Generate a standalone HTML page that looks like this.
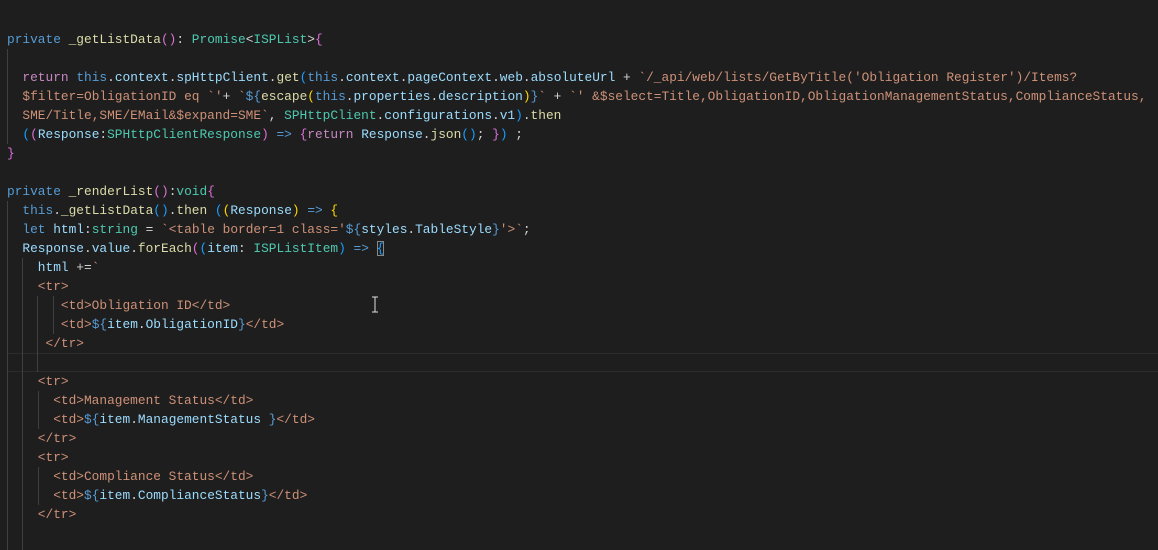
<!DOCTYPE html>
<html><head><meta charset="utf-8"><style>
html,body{margin:0;padding:0;background:#1e1e1e;width:1158px;height:550px;overflow:hidden}
.l{position:absolute;left:7px;height:19px;line-height:19px;font-family:"Liberation Mono",monospace;font-size:12.83px;white-space:pre;color:#d4d4d4}
.k{color:#569cd6}.r{color:#c586c0}.f{color:#dcdcaa}.t{color:#4ec9b0}.s{color:#ce9178}.v{color:#9cdcfe}
.p1{color:#da70d6}.p2{color:#ffd700}.p3{color:#179fff}
.g{position:absolute;width:1px;background:#404040}
</style></head><body>
<div style="position:absolute;left:7px;top:353px;width:1151px;height:17px;border-top:1px solid #2c2c2c;border-bottom:1px solid #2c2c2c"></div>
<div class="g" style="left:7px;top:49px;height:95px"></div>
<div class="g" style="left:7px;top:201px;height:349px"></div>
<div class="g" style="left:22px;top:258px;height:292px"></div>
<div class="g" style="left:37px;top:296px;height:76px"></div>
<div class="g" style="left:53px;top:296px;height:38px"></div>
<div class="g" style="left:38px;top:391px;height:38px"></div>
<div class="g" style="left:38px;top:467px;height:38px"></div>

<div class="l" style="top:30px"><span class="k">private</span> <span class="f">_getListData</span><span class="p1">()</span>: <span class="t">Promise</span>&lt;<span class="t">ISPList</span>&gt;<span class="p1">{</span></div>
<div class="l" style="top:68px">  <span class="r">return</span> <span class="k">this</span>.<span class="v">context</span>.<span class="v">spHttpClient</span>.<span class="f">get</span><span class="p3">(</span><span class="k">this</span>.<span class="v">context</span>.<span class="v">pageContext</span>.<span class="v">web</span>.<span class="v">absoluteUrl</span> + <span class="s">`/_api/web/lists/GetByTitle('Obligation Register')/Items?</span></div>
<div class="l" style="top:87px">  <span class="s">$filter=ObligationID eq `'</span>+ <span class="s">`</span><span class="k">${</span><span class="f">escape</span><span class="p2">(</span><span class="k">this</span>.<span class="v">properties</span>.<span class="v">description</span><span class="p2">)</span><span class="k">}</span><span class="s">`</span> + <span class="s">`' &amp;$select=Title,ObligationID,ObligationManagementStatus,ComplianceStatus,</span></div>
<div class="l" style="top:106px">  <span class="s">SME/Title,SME/EMail&amp;$expand=SME`</span>, <span class="t">SPHttpClient</span>.<span class="v">configurations</span>.<span class="v">v1</span><span class="p3">)</span>.<span class="f">then</span></div>
<div class="l" style="top:125px">  <span class="p3">(</span><span class="p1">(</span><span class="v">Response</span>:<span class="t">SPHttpClientResponse</span><span class="p1">)</span> <span class="k">=&gt;</span> <span class="p1">{</span><span class="r">return</span> <span class="v">Response</span>.<span class="f">json</span><span class="p3">()</span>; <span class="p1">}</span><span class="p3">)</span> ;</div>
<div class="l" style="top:144px"><span class="p1">}</span></div>
<div class="l" style="top:182px"><span class="k">private</span> <span class="f">_renderList</span><span class="p1">()</span>:<span class="t">void</span><span class="p1">{</span></div>
<div class="l" style="top:201px">  <span class="k">this</span>.<span class="f">_getListData</span><span class="p3">()</span>.<span class="f">then</span> <span class="p3">(</span><span class="p2">(</span><span class="v">Response</span><span class="p2">)</span> <span class="k">=&gt;</span> <span class="p2">{</span></div>
<div class="l" style="top:220px">  <span class="k">let</span> <span class="v">html</span>:<span class="t">string</span> = <span class="s">`&lt;table border=1 class='</span><span class="k">${</span><span class="v">styles</span>.<span class="v">TableStyle</span><span class="k">}</span><span class="s">'&gt;`</span>;</div>
<div class="l" style="top:239px">  <span class="v">Response</span>.<span class="v">value</span>.<span class="f">forEach</span><span class="p1">(</span><span class="p3">(</span><span class="v">item</span>: <span class="t">ISPListItem</span><span class="p3">)</span> <span class="k">=&gt;</span> <span class="p3" style="outline:1px solid #888;outline-offset:-1px">{</span></div>
<div class="l" style="top:258px">    <span class="v">html</span> +=<span class="s">`</span></div>
<div class="l s" style="top:277px">    &lt;tr&gt;</div>
<div class="l s" style="top:296px">       &lt;td&gt;Obligation ID&lt;/td&gt;</div>
<div class="l" style="top:315px">       <span class="s">&lt;td&gt;</span><span class="k">${</span><span class="v">item</span>.<span class="v">ObligationID</span><span class="k">}</span><span class="s">&lt;/td&gt;</span></div>
<div class="l s" style="top:334px">     &lt;/tr&gt;</div>
<div class="l s" style="top:372px">    &lt;tr&gt;</div>
<div class="l s" style="top:391px">      &lt;td&gt;Management Status&lt;/td&gt;</div>
<div class="l" style="top:410px">      <span class="s">&lt;td&gt;</span><span class="k">${</span><span class="v">item</span>.<span class="v">ManagementStatus</span> <span class="k">}</span><span class="s">&lt;/td&gt;</span></div>
<div class="l s" style="top:429px">    &lt;/tr&gt;</div>
<div class="l s" style="top:448px">    &lt;tr&gt;</div>
<div class="l s" style="top:467px">      &lt;td&gt;Compliance Status&lt;/td&gt;</div>
<div class="l" style="top:486px">      <span class="s">&lt;td&gt;</span><span class="k">${</span><span class="v">item</span>.<span class="v">ComplianceStatus</span><span class="k">}</span><span class="s">&lt;/td&gt;</span></div>
<div class="l s" style="top:505px">    &lt;/tr&gt;</div>
<svg style="position:absolute;left:370px;top:296px" width="10" height="18"><path d="M2 1h6M5 1v15M2 16h6" stroke="#e0e0e0" stroke-width="1" fill="none"/></svg>
</body></html>
